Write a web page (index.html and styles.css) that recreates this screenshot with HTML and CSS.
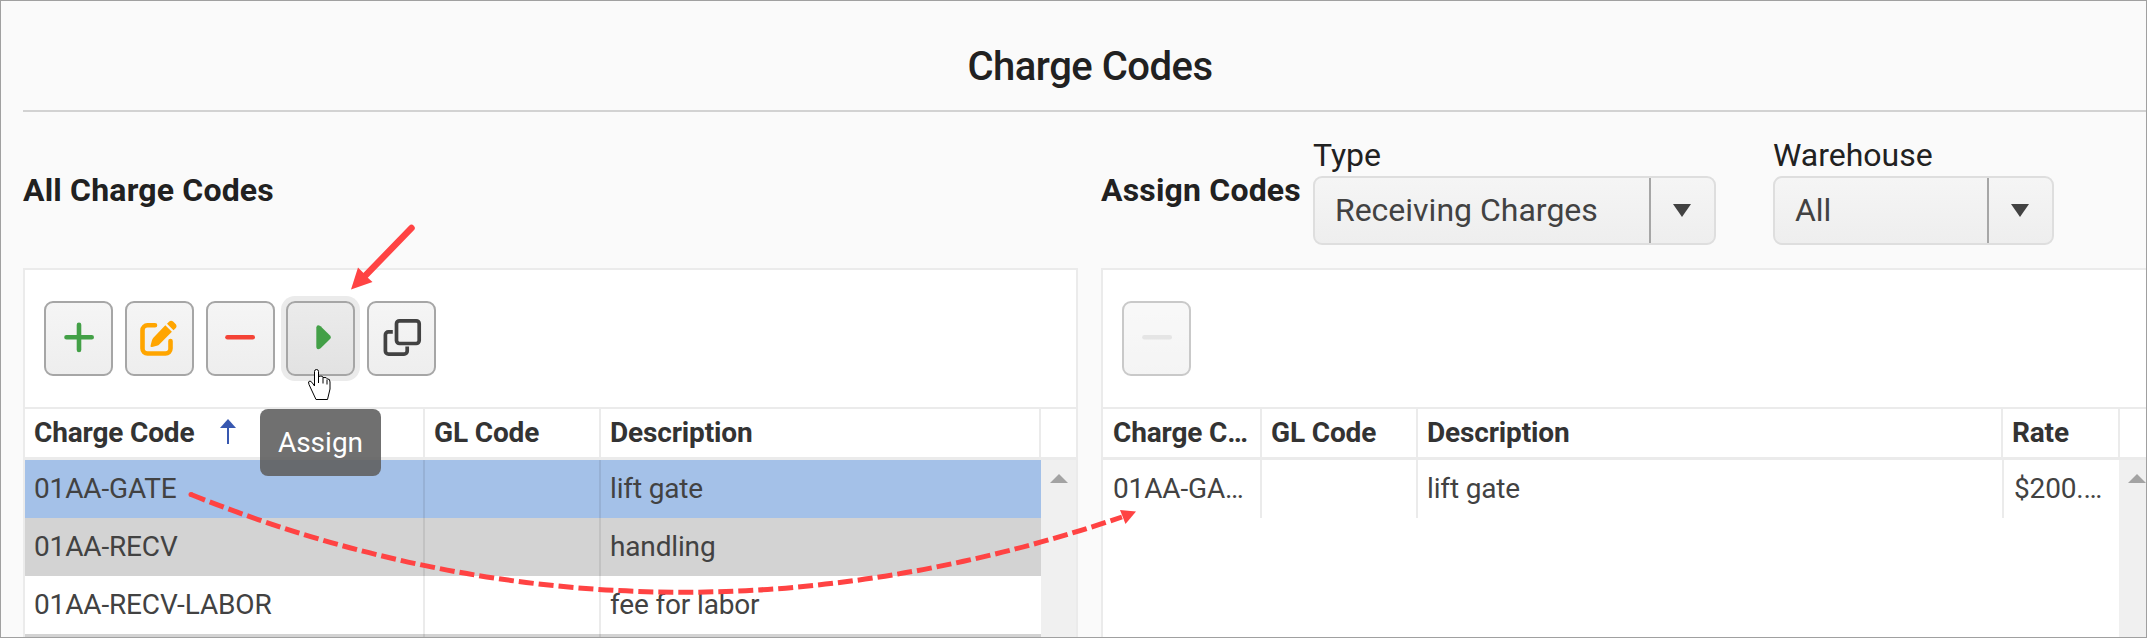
FILE: index.html
```html
<!DOCTYPE html>
<html lang="en">

<head>
  <meta charset="utf-8">
  <title>Charge Codes</title>
  <meta name="viewport" content="width=device-width, initial-scale=1">
  <link rel="stylesheet" href="styles.css">
</head>
<body>
  <div class="page">
    <h1 class="page-title">Charge Codes</h1>
    <div class="columns">
      <section class="side">
        <div class="side-head">
          <h2 class="side-title">All Charge Codes</h2>
        </div>
        <div class="panel">
          <div class="toolbar">
            <button class="btn" aria-label="Add">
              <svg width="40" height="40" viewBox="0 0 40 40" fill="none" stroke="#43a047" stroke-width="4.600" stroke-linecap="round"><path d="M7.500 20.300h25.200M20 7.700v25.200"/></svg>
            </button>
            <button class="btn" aria-label="Edit">
              <svg width="40" height="40" viewBox="0 0 40 40"><path d="M16 8.300H8.500a5 5 0 0 0-5 5V31.500a5 5 0 0 0 5 5H26.500a5 5 0 0 0 5-5V24" fill="none" stroke="#ffa500" stroke-width="4.600" stroke-linecap="round"/><path d="M26.300 8.300l6.600 6.500L20.500 27.200q-1 1-2.600 1.500l-4.800 1.300q-2 .4-1.500-1.600l1.300-4.900q.5-1.600 1.500-2.700zM28 6.700l2-2q2-1.900 4.400 0l2.200 2.200q1.900 2.200 0 4.300l-2.100 2z" fill="#ffa500"/></svg>
            </button>
            <button class="btn" aria-label="Remove">
              <svg width="40" height="40" viewBox="0 0 40 40" fill="none" stroke="#f44336" stroke-width="4.600" stroke-linecap="round"><path d="M7.500 20.300h25.200"/></svg>
            </button>
            <button class="btn btn-hover" aria-label="Assign">
              <svg width="40" height="40" viewBox="0 0 40 40"><path d="M19.600 9.300L29.300 18.800q1.300 1.500 0 3L19.600 31.200q-3.600 2.500-4.300-1V10.500q.6-3.600 4.300-1.200z" fill="#43a047"/></svg>
            </button>
            <button class="btn" aria-label="Copy">
              <svg width="40" height="40" viewBox="0 0 40 40" fill="none" stroke="#424242" stroke-width="3.700"><rect x="14.500" y="3.800" width="22.700" height="22.700" rx="3"/><path d="M10.800 14.900H6.400a3 3 0 0 0-3 3V34a3.200 3.200 0 0 0 3.200 3.200H22a3.200 3.200 0 0 0 3.200-3.200V29.500"/></svg>
            </button>
          </div>
          <div class="grid grid-all">
            <div class="row head">
              <div class="cell">Charge Code
                <svg class="sort" width="16" height="26" viewBox="0 0 16 26" fill="#3858b0"><path d="M8 0l8 9H0z"/><path d="M7 8h2v17H7z"/></svg>
              </div>
              <div class="cell">GL Code</div>
              <div class="cell">Description</div>
              <div class="cell"></div>
            </div>
            <div class="body">
              <div class="rows">
                <div class="row selected">
                  <div class="cell">01AA-GATE</div>
                  <div class="cell"></div>
                  <div class="cell">lift gate</div>
                </div>
                <div class="row alt">
                  <div class="cell">01AA-RECV</div>
                  <div class="cell"></div>
                  <div class="cell">handling</div>
                </div>
                <div class="row">
                  <div class="cell">01AA-RECV-LABOR</div>
                  <div class="cell"></div>
                  <div class="cell">fee for labor</div>
                </div>
                <div class="row alt">
                  <div class="cell"></div>
                  <div class="cell"></div>
                  <div class="cell"></div>
                </div>
              </div>
              <div class="scrollbar"><span class="scroll-up"></span></div>
            </div>
          </div>
        </div>
      </section>

      <section class="side">
        <div class="side-head">
          <h2 class="side-title">Assign Codes</h2>
          <div class="field field-type">
            <label class="field-label">Type</label>
            <div class="combo">
              <span class="combo-value">Receiving Charges</span>
              <span class="combo-btn"><span class="caret"></span></span>
            </div>
          </div>
          <div class="field field-warehouse">
            <label class="field-label">Warehouse</label>
            <div class="combo">
              <span class="combo-value">All</span>
              <span class="combo-btn"><span class="caret"></span></span>
            </div>
          </div>
        </div>
        <div class="panel">
          <div class="toolbar">
            <button class="btn btn-disabled" aria-label="Remove">
              <svg width="40" height="40" viewBox="0 0 40 40" fill="none" stroke="#d4d4d4" stroke-width="4.600" stroke-linecap="round"><path d="M7.500 20.300h25.200"/></svg>
            </button>
          </div>
          <div class="grid grid-assigned">
            <div class="row head">
              <div class="cell">Charge C…</div>
              <div class="cell">GL Code</div>
              <div class="cell">Description</div>
              <div class="cell">Rate</div>
              <div class="cell"></div>
            </div>
            <div class="body">
              <div class="rows">
                <div class="row">
                  <div class="cell">01AA-GA…</div>
                  <div class="cell"></div>
                  <div class="cell">lift gate</div>
                  <div class="cell">$200.…</div>
                </div>
              </div>
              <div class="scrollbar"><span class="scroll-up"></span></div>
            </div>
          </div>
        </div>
      </section>
    </div>

    <div class="tooltip">Assign</div>

    <!-- arrows and mouse pointer, drawn over the page -->
    <svg class="overlay" width="2147" height="638" viewBox="0 0 2147 638">
      <path d="M411.500 228L364 277" stroke="#ff4343" stroke-width="6.500" stroke-linecap="round"/>
      <path d="M351 289.500L358 267.500L363 272.500L367 277L372.500 282z" fill="#ff4343"/>
      <circle cx="191" cy="494.500" r="2.500" fill="#ff4343"/>
      <path d="M191 494.500Q648 678 1122 517" fill="none" stroke="#ff4343" stroke-width="5" stroke-dasharray="15 5"/>
      <path d="M1136 511.500L1120 510L1125.500 524z" fill="#ff4343"/>
      <path d="M314.500 386V371.500q0-2 2-2t2 2V376.500q4.500-1 4.500 1q4-.5 4.500 1.500q2.500-.5 2.500 3V389L327.500 399.500H316L309 384.500q-1.500-3.500 1-3.500q1.500 0 4.500 5" fill="#fff" stroke="#000" stroke-width="1"/>
      <path d="M318.500 376v7M323 377.500v6M327 379.500v5" stroke="#000" stroke-width="1"/>
    </svg>
  </div>
</body>
</html>
```

FILE: styles.css
```css
/* basic style */
* {
  box-sizing: border-box;
}

body {
  margin: 0;
  font-family: Roboto, "Liberation Sans", sans-serif;
  color: #212121;
}

.page {
  position: relative;
  width: 2147px;
  height: 638px;
  border: 1px solid #a0a0a0;
  background: #fafafa;
  padding-left: 22px;
  overflow: hidden;
}

.page-title {
  height: 111px;
  margin: 0;
  padding-left: 11px;
  border-bottom: 2px solid #d2d2d2;
  font-size: 40px;
  font-weight: 500;
  letter-spacing: -.5px;
  line-height: 131px;
  text-align: center;
}

.columns {
  display: grid;
  grid-template-columns: 1055px 1100px;
  column-gap: 23px;
}

.side-head {
  display: flex;
  height: 156px;
}

.side-title {
  margin: 0;
  padding-top: 59px;
  font-size: 32px;
  font-weight: bold;
  letter-spacing: .18px;
  line-height: 38px;
}

/* drop downs */
.field {
  padding-top: 24px;
}

.field-type {
  width: 403px;
  margin-left: 12px;
}

.field-warehouse {
  width: 281px;
  margin-left: 57px;
}

.field-label {
  display: block;
  height: 40px;
  font-size: 32px;
  line-height: 38px;
}

.combo {
  display: flex;
  height: 69px;
  border: 2px solid #dedede;
  border-radius: 9px;
  background: linear-gradient(#f5f5f5, #eee);
  color: #424242;
  font-size: 32px;
  line-height: 65px;
}

.combo-value {
  flex: 1;
  padding-left: 20px;
}

.combo-btn {
  display: flex;
  width: 65px;
  align-items: center;
  justify-content: center;
  border-left: 2px solid #a6a6a6;
}

.caret {
  border: 9px solid transparent;
  border-top: 13px solid #424242;
  border-bottom: 0;
}

/* panels */
.panel {
  height: 400px;
  border: 2px solid #ebebeb;
  background: #fff;
}

.toolbar {
  display: flex;
  gap: 11.750px;
  height: 137px;
  padding: 31px 19px;
}

.btn {
  display: flex;
  width: 69px;
  height: 75px;
  padding: 0 0 3px;
  align-items: center;
  justify-content: center;
  border: 2px solid #a6a6a6;
  border-radius: 9px;
  background: linear-gradient(#f5f5f5, #eee);
}

.btn-hover {
  background: linear-gradient(#ebebeb, #e2e2e2);
  box-shadow: 0 0 0 5px #ebebeb;
}

.btn-disabled {
  opacity: .6;
}

/* tables */
.row {
  display: grid;
  height: 58px;
}

.grid-all .row {
  grid-template-columns: 400px 176px 440px 35px;
}

.grid-all .rows .row {
  grid-template-columns: 400px 176px 440px;
}

.grid-assigned .row {
  grid-template-columns: 159px 156px 585px 117px 80px;
}

.grid-assigned .rows .row {
  grid-template-columns: 159px 156px 586px 115px;
}

.cell {
  padding-left: 9px;
  border-right: 2px solid rgba(0, 0, 0, .08);
  color: #424242;
  font-size: 28px;
  letter-spacing: -.15px;
  line-height: 57px;
  white-space: nowrap;
  overflow: hidden;
}

.cell:last-child {
  border-right: 0;
}

.grid-assigned .cell:first-child,
.grid-assigned .rows .cell:last-child {
  padding-left: 10px;
}

.grid .head {
  height: 53px;
  border-top: 2px solid #ebebeb;
  border-bottom: 3px solid #ebebeb;
}

.head .cell {
  color: #333;
  font-weight: bold;
  line-height: 48px;
}

.sort {
  margin-left: 19px;
  vertical-align: -3px;
}

.body {
  display: flex;
  height: 200px;
}

.selected {
  background: #a4c1e8;
}

.alt {
  background: #d3d3d3;
}

.scrollbar {
  width: 35px;
  padding: 14px 0 0 9px;
  background: #f0f0f0;
}

.scroll-up {
  display: block;
  width: 18px;
  border: 9px solid transparent;
  border-bottom-color: #a3a3a3;
  border-top: 0;
}

/* things lying over the page */
.tooltip {
  position: absolute;
  left: 259px;
  top: 408px;
  width: 121px;
  height: 67px;
  border-radius: 8px;
  background: rgba(97, 97, 97, .9);
  color: #fff;
  font-size: 28px;
  line-height: 67px;
  text-align: center;
}

.overlay {
  position: absolute;
  left: -1px;
  top: -1px;
}
```
